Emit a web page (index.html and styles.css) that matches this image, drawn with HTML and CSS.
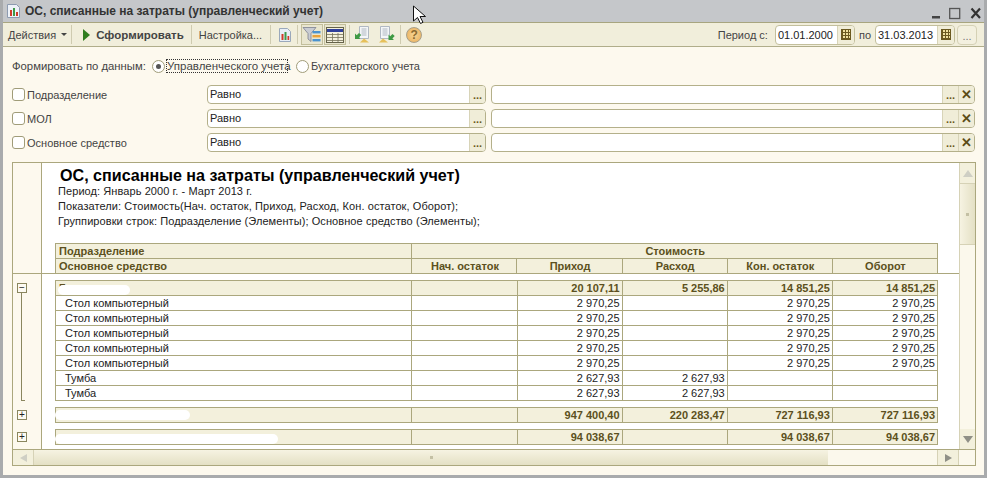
FILE: index.html
```html
<!DOCTYPE html>
<html lang="ru">
<head>
    <meta charset="UTF-8">
    <title>ОС, списанные на затраты (управленческий учет)</title>
    <link rel="stylesheet" href="styles.css">
</head>
<body>
    <div class="window">
        <div class="titlebar">
            <svg class="title-icon" width="15" height="16" viewBox="0 0 15 16">
                <path d="M1.500 1.500h9l3 3v10h-12z" fill="#eef2f8" stroke="#8d9bb0"/>
                <rect x="4" y="7" width="2" height="6" fill="#d03a2a"/>
                <rect x="7" y="5" width="2" height="8" fill="#3d9a48"/>
                <rect x="10" y="9" width="2" height="4" fill="#d03a2a"/>
            </svg>
            <span class="title-text">ОС, списанные на затраты (управленческий учет)</span>
            <div class="win-buttons">
                <svg width="53" height="16" viewBox="0 0 53 16">
                    <rect x="2" y="11" width="8" height="2.500" fill="#444"/>
                    <rect x="19.700" y="3.500" width="10" height="10" fill="none" stroke="#555" stroke-width="1.300"/>
                    <path d="M41.500 3.500l8.500 9.500M50 3.500l-8.500 9.500" stroke="#333" stroke-width="2.200"/>
                </svg>
            </div>
        </div>

        <div class="toolbar">
            <span class="tool-text actions">Действия</span>
            <span class="drop-arrow"></span>
            <span class="tool-sep sep-a"></span>
            <span class="play"></span>
            <span class="tool-text tool-bold">Сформировать</span>
            <span class="tool-sep sep-b"></span>
            <span class="tool-text">Настройка...</span>
            <span class="tool-sep sep-c"></span>
            <svg class="tool-icon" width="14" height="16" viewBox="0 0 14 16">
                <path d="M1.500 1.500h8l3 3v10h-11z" fill="#e8eef6" stroke="#9aa8bb"/>
                <rect x="3.500" y="7" width="2" height="6" fill="#d03a2a"/>
                <rect x="6.500" y="5" width="2" height="8" fill="#3d9a48"/>
                <rect x="9.500" y="9" width="1.700" height="4" fill="#d03a2a"/>
            </svg>
            <span class="tool-sep sep-d"></span>
            <span class="toggle">
                <svg width="20" height="18" viewBox="0 0 20 18">
                    <path d="M1 1.500h13L9 7.500v8l-3-2.500V7.500z" fill="#c9ccd2" stroke="#7d8290" stroke-width=".8"/>
                    <rect x="10.500" y="5" width="8" height="2.400" fill="#4a93d0"/>
                    <rect x="10.500" y="9" width="8" height="2.400" fill="#e8a23a"/>
                    <rect x="10.500" y="13" width="8" height="2.400" fill="#4a93d0"/>
                </svg>
            </span>
            <span class="toggle">
                <svg width="20" height="18" viewBox="0 0 20 18">
                    <rect x="1.500" y="1.500" width="17" height="15" fill="#f4f1dd" stroke="#66634a"/>
                    <rect x="2" y="3" width="16" height="3" fill="#2f3f9a"/>
                    <path d="M2 8.500h16M2 11.500h16M2 14.500h16M7.500 7v9M13 7v9" stroke="#77745a" stroke-width=".8"/>
                </svg>
            </span>
            <span class="tool-sep sep-e"></span>
            <svg class="tool-icon icon-load" width="18" height="18" viewBox="0 0 18 18">
                <path d="M5.500 .500h9v12h-9z" fill="#f4f6f8" stroke="#b0b8c2"/>
                <path d="M7.500 3h5M7.500 5h5M7.500 7h5M7.500 9h5" stroke="#b0b8c2"/>
                <path d="M1 13V7.500l1.700 1.700 2.300-2.300 2.200 2.200-2.300 2.300L6.500 13z" fill="#3f9a44"/>
                <path d="M6 16.500l4-4 5 4z" fill="#e6c05a"/>
            </svg>
            <svg class="tool-icon icon-save" width="18" height="18" viewBox="0 0 18 18">
                <path d="M2.500 .500h9v12h-9z" fill="#f4f6f8" stroke="#b0b8c2"/>
                <path d="M4.500 3h5M4.500 5h5M4.500 7h5M4.500 9h5" stroke="#b0b8c2"/>
                <path d="M10.500 14V8.500l1.700 1.700 2.300-2.300 2.200 2.200-2.300 2.300L16 14z" fill="#3f9a44"/>
                <path d="M1 16.500l4-4 5 4z" fill="#e6c05a"/>
            </svg>
            <span class="tool-sep sep-f"></span>
            <span class="help">?</span>

            <div class="period">
                <span class="tool-text">Период с:</span>
                <span class="date-field">
                    <span class="date-value">01.01.2000</span>
                    <span class="date-btn"><span class="cal"></span></span>
                </span>
                <span class="tool-text">по</span>
                <span class="date-field">
                    <span class="date-value">31.03.2013</span>
                    <span class="date-btn"><span class="cal"></span></span>
                </span>
                <span class="period-more">...</span>
            </div>
        </div>

        <div class="form">
            <div class="source-row">
                <span class="source-label">Формировать по данным:</span>
                <span class="radio radio-on"></span>
                <span class="radio-text radio-focus">Управленческого учета</span>
                <span class="radio"></span>
                <span class="radio-text">Бухгалтерского учета</span>
            </div>

            <div class="filter-row">
                <span class="check"></span>
                <span class="filter-name">Подразделение</span>
                <span class="field field-kind"><span class="field-value">Равно</span><span class="field-btn">...</span></span>
                <span class="field field-val"><span class="field-value"></span><span class="field-btn">...</span><span class="field-btn field-x">✕</span></span>
            </div>
            <div class="filter-row">
                <span class="check"></span>
                <span class="filter-name">МОЛ</span>
                <span class="field field-kind"><span class="field-value">Равно</span><span class="field-btn">...</span></span>
                <span class="field field-val"><span class="field-value"></span><span class="field-btn">...</span><span class="field-btn field-x">✕</span></span>
            </div>
            <div class="filter-row">
                <span class="check"></span>
                <span class="filter-name">Основное средство</span>
                <span class="field field-kind"><span class="field-value">Равно</span><span class="field-btn">...</span></span>
                <span class="field field-val"><span class="field-value"></span><span class="field-btn">...</span><span class="field-btn field-x">✕</span></span>
            </div>

            <div class="report">
                <div class="report-main">
                    <div class="report-body">
                        <div class="report-head">
                            <div class="tree"></div>
                            <div class="head-content">
                                <h1>ОС, списанные на затраты (управленческий учет)</h1>
                                <p>Период: Январь 2000 г. - Март 2013 г.</p>
                                <p>Показатели: Стоимость(Нач. остаток, Приход, Расход, Кон. остаток, Оборот);</p>
                                <p>Группировки строк: Подразделение (Элементы); Основное средство (Элементы);</p>
                                <table class="grid grid-head">
                                    <colgroup><col class="c-name"><col class="c-num"><col class="c-num"><col class="c-num"><col class="c-num"><col class="c-num"></colgroup>
                                    <tr><td class="name">Подразделение</td><td colspan="5" class="center">Стоимость</td></tr>
                                    <tr><td class="name">Основное средство</td><td class="center">Нач. остаток</td><td class="center">Приход</td><td class="center">Расход</td><td class="center">Кон. остаток</td><td class="center">Оборот</td></tr>
                                </table>
                            </div>
                        </div>

                        <div class="group">
                            <div class="tree">
                                <span class="node">−</span>
                                <span class="node-line"></span>
                            </div>
                            <div class="group-content">
                                <table class="grid">
                                    <colgroup><col class="c-name"><col class="c-num"><col class="c-num"><col class="c-num"><col class="c-num"><col class="c-num"></colgroup>
                                    <tr class="total"><td class="name">Г<span class="blot blot-a"></span></td><td></td><td>20 107,11</td><td>5 255,86</td><td>14 851,25</td><td>14 851,25</td></tr>
                                    <tr><td class="item">Стол компьютерный</td><td></td><td>2 970,25</td><td></td><td>2 970,25</td><td>2 970,25</td></tr>
                                    <tr><td class="item">Стол компьютерный</td><td></td><td>2 970,25</td><td></td><td>2 970,25</td><td>2 970,25</td></tr>
                                    <tr><td class="item">Стол компьютерный</td><td></td><td>2 970,25</td><td></td><td>2 970,25</td><td>2 970,25</td></tr>
                                    <tr><td class="item">Стол компьютерный</td><td></td><td>2 970,25</td><td></td><td>2 970,25</td><td>2 970,25</td></tr>
                                    <tr><td class="item">Стол компьютерный</td><td></td><td>2 970,25</td><td></td><td>2 970,25</td><td>2 970,25</td></tr>
                                    <tr><td class="item">Тумба</td><td></td><td>2 627,93</td><td>2 627,93</td><td></td><td></td></tr>
                                    <tr><td class="item">Тумба</td><td></td><td>2 627,93</td><td>2 627,93</td><td></td><td></td></tr>
                                </table>
                            </div>
                        </div>

                        <div class="group">
                            <div class="tree"><span class="node">+</span></div>
                            <div class="group-content">
                                <table class="grid">
                                    <colgroup><col class="c-name"><col class="c-num"><col class="c-num"><col class="c-num"><col class="c-num"><col class="c-num"></colgroup>
                                    <tr class="total"><td class="name"><span class="blot blot-b"></span></td><td></td><td>947 400,40</td><td>220 283,47</td><td>727 116,93</td><td>727 116,93</td></tr>
                                </table>
                            </div>
                        </div>

                        <div class="group group-last">
                            <div class="tree"><span class="node">+</span></div>
                            <div class="group-content">
                                <table class="grid">
                                    <colgroup><col class="c-name"><col class="c-num"><col class="c-num"><col class="c-num"><col class="c-num"><col class="c-num"></colgroup>
                                    <tr class="total"><td class="name"><span class="blot blot-c"></span></td><td></td><td>94 038,67</td><td></td><td>94 038,67</td><td>94 038,67</td></tr>
                                </table>
                            </div>
                        </div>
                    </div>

                    <div class="vscroll">
                        <span class="sb-btn sb-up"><span class="arrow-up"></span></span>
                        <span class="sb-thumb sb-thumb-v"></span>
                        <span class="sb-track"></span>
                        <span class="sb-btn sb-down"><span class="arrow-down"></span></span>
                    </div>
                </div>
                <div class="hscroll">
                    <span class="sb-btn sb-left"><span class="arrow-left"></span></span>
                    <span class="sb-thumb sb-thumb-h"></span>
                    <span class="sb-track"></span>
                    <span class="sb-btn sb-right"><span class="arrow-right"></span></span>
                    <span class="sb-corner"></span>
                </div>
            </div>
        </div>

        <!-- курсор мыши поверх окна -->
        <svg class="cursor" width="16" height="20" viewBox="0 0 16 20">
            <path d="M1.500 1v15l4-3.500 3 6 2.500-1.200-3-5.800h5.500z" fill="#fff" stroke="#111" stroke-width="1"/>
        </svg>
    </div>
</body>
</html>
```

FILE: styles.css
```css
body {
    margin: 0;
    background: #fff;
    font-family: "Liberation Sans", Arial, sans-serif;
    font-size: 11px;
    color: #333;
}
.window {
    position: relative;
    width: 987px;
    height: 478px;
    box-sizing: border-box;
    border: 3px solid #a9abad;
    border-top: none;
    background: #fdf9ee;
    display: flex;
    flex-direction: column;
    overflow: hidden;
}
.titlebar {
    height: 22px;
    flex: none;
    background: #c5c7ca;
    display: flex;
    align-items: center;
    padding-left: 3px;
}
.title-icon {
    margin-right: 4px;
}
.title-text {
    font-size: 12px;
    font-weight: bold;
    color: #333;
}
.win-buttons {
    margin-left: auto;
    margin-right: 1px;
    height: 16px;
    padding-top: 3px;
}
.toolbar {
    height: 25px;
    flex: none;
    box-sizing: border-box;
    background: #f1eedb;
    border-top: 1px solid #a8a57f;
    border-bottom: 1px solid #b0ad8a;
    display: flex;
    align-items: center;
    padding-left: 5px;
}
.tool-text {
    font-size: 11px;
    color: #444;
    white-space: nowrap;
}
.tool-bold {
    font-size: 11.500px;
    font-weight: bold;
    margin-left: 6px;
}
.drop-arrow {
    width: 0;
    height: 0;
    border-left: 3px solid transparent;
    border-right: 3px solid transparent;
    border-top: 3px solid #444;
    margin-left: 5px;
}
.tool-sep {
    width: 1px;
    height: 19px;
    background: #cfcbb0;
}
.sep-a { margin: 0 11px 0 4px; }
.sep-b { margin: 0 7px 0 7px; }
.sep-c { margin: 0 7px 0 8px; }
.sep-d { margin: 0 3px 0 5px; }
.sep-e { margin: 0 4px 0 2px; }
.sep-f { margin: 0 5px 0 4px; }
.play {
    width: 0;
    height: 0;
    border-left: 7px solid #2f7d1e;
    border-top: 6px solid transparent;
    border-bottom: 6px solid transparent;
}
.toggle {
    width: 22px;
    height: 21px;
    box-sizing: border-box;
    border: 1px solid #c3bf9c;
    background: #e9e6cf;
    display: flex;
    align-items: center;
    justify-content: center;
    margin-right: 1px;
}
.icon-load { margin-right: 6px; }
.help {
    width: 16px;
    height: 16px;
    box-sizing: border-box;
    border-radius: 50%;
    border: 1px solid #a8a08a;
    background: radial-gradient(circle, #f6d595, #e8ac58);
    color: #8a6a30;
    font-size: 12px;
    font-weight: bold;
    line-height: 14px;
    text-align: center;
}
.period {
    margin-left: auto;
    margin-right: 7px;
    display: flex;
    align-items: center;
}
.date-field {
    width: 80px;
    height: 20px;
    box-sizing: border-box;
    margin: 0 4px 0 7px;
    border: 1px solid #c3bf9c;
    border-radius: 4px;
    background: #fff;
    display: flex;
    overflow: hidden;
}
.date-field + .tool-text + .date-field {
    margin-left: 4px;
    margin-right: 2px;
}
.date-value {
    flex: 1;
    font-size: 11px;
    line-height: 18px;
    padding-left: 2px;
    color: #222;
}
.date-btn {
    width: 16px;
    background: #f0edd8;
    border-left: 1px solid #d8d4b8;
    display: flex;
    align-items: center;
    justify-content: center;
}
.cal {
    width: 10px;
    height: 11px;
    box-sizing: border-box;
    border: 1px solid #6b5a20;
    background:
        repeating-linear-gradient(0deg, #6b5a20 0 1px, transparent 1px 3px),
        repeating-linear-gradient(90deg, #6b5a20 0 1px, #f0e2a0 1px 3px);
}
.period-more {
    width: 20px;
    height: 20px;
    box-sizing: border-box;
    border: 1px solid #d5d1b5;
    border-radius: 4px;
    background: #f3f0df;
    text-align: center;
    line-height: 20px;
    color: #777;
}
.form {
    flex: 1;
    min-height: 0;
    padding: 0 8px 9px 9px;
    display: flex;
    flex-direction: column;
}
.source-row {
    height: 38px;
    flex: none;
    display: flex;
    align-items: center;
    color: #444;
}
.source-label {
    width: 140px;
    font-size: 11.300px;
    white-space: nowrap;
}
.radio {
    width: 13px;
    height: 13px;
    box-sizing: border-box;
    border: 1px solid #a09c78;
    border-radius: 50%;
    background: #fff;
    margin-right: 2px;
    position: relative;
}
.radio-on::after {
    content: "";
    position: absolute;
    left: 3px;
    top: 3px;
    width: 5px;
    height: 5px;
    border-radius: 50%;
    background: #555;
}
.radio-text {
    color: #444;
}
.radio-focus {
    width: 120px;
    box-sizing: border-box;
    outline: 1px dotted #333;
    margin-right: 9px;
    font-size: 11.500px;
    white-space: nowrap;
}
.filter-row {
    height: 19px;
    flex: none;
    margin-bottom: 5px;
    display: flex;
    align-items: center;
    color: #444;
}
.check {
    width: 13px;
    height: 13px;
    box-sizing: border-box;
    border: 1px solid #a09c78;
    border-radius: 3px;
    background: #fff;
    margin-right: 2px;
}
.filter-name {
    width: 180px;
}
.field {
    height: 19px;
    box-sizing: border-box;
    border: 1px solid #b4b08a;
    border-radius: 4px;
    background: #fff;
    display: flex;
    overflow: hidden;
}
.field-kind {
    width: 279px;
    margin-right: 5px;
}
.field-val {
    width: 484px;
}
.field-value {
    flex: 1;
    line-height: 17px;
    padding-left: 2px;
    color: #222;
}
.field-btn {
    width: 15px;
    background: #f0edd8;
    border-left: 1px solid #d8d4b8;
    color: #6b5a20;
    font-weight: bold;
    text-align: center;
    line-height: 19px;
}
.field-x {
    font-size: 13px;
    line-height: 17px;
    color: #5c4c16;
}
.report {
    flex: 1;
    min-height: 0;
    margin-top: 5px;
    display: flex;
    flex-direction: column;
    border: 1px solid #aba77d;
    background: #fff;
}
.report-main {
    flex: 1;
    min-height: 0;
    display: flex;
}
.report-body {
    flex: 1;
    min-width: 0;
    display: flex;
    flex-direction: column;
    overflow: hidden;
}
.report-head {
    height: 111px;
    flex: none;
    box-sizing: border-box;
    border-bottom: 1px solid #aba77d;
    display: flex;
}
.tree {
    width: 29px;
    flex: none;
    box-sizing: border-box;
    background: #fdf9ee;
    border-right: 1px solid #aba77d;
    position: relative;
}
.head-content {
    padding: 0 0 0 13px;
}
h1 {
    margin: 2px 0 0 5px;
    font-size: 16.100px;
    line-height: 20px;
    font-weight: bold;
    color: #000;
}
.head-content p {
    margin: 0 0 0 3px;
    font-size: 11px;
    letter-spacing: .08px;
    line-height: 15px;
    color: #222;
}
.head-content h1 + p {
    margin-top: -1px;
}
.grid {
    border-collapse: collapse;
    table-layout: fixed;
    width: 883px;
    font-size: 11px;
}
.grid-head {
    margin-top: 14px;
    background: #f3f0dc;
    font-weight: bold;
}
.c-name { width: 356px; }
.c-num { width: 105px; }
.grid td {
    height: 14px;
    padding: 0 2px 0 3px;
    border: 1px solid #aba77d;
    line-height: 14px;
    text-align: right;
    color: #222;
    white-space: nowrap;
    overflow: hidden;
}
.grid-head td {
    color: #5c5020;
}
.grid .name {
    text-align: left;
}
.grid .center {
    text-align: center;
}
.grid .item {
    text-align: left;
    padding-left: 9px;
}
.total {
    background: #f3f0dc;
}
.grid .total td {
    font-weight: bold;
    color: #5c5020;
}
.group {
    flex: none;
    display: flex;
    position: relative;
}
.group-last {
    flex: 1;
}
.group-content {
    padding: 6px 0 0 13px;
}
.blot {
    position: absolute;
    background: #fff;
    border-radius: 5px;
    height: 10px;
}
.blot-a { left: 45px; top: 11px; width: 72px; }
.blot-b { left: 42px; top: 9px; width: 135px; }
.blot-c { left: 42px; top: 11px; width: 223px; }
.node {
    position: absolute;
    left: 4px;
    top: 9px;
    width: 10px;
    height: 10px;
    box-sizing: border-box;
    border: 1px solid #8a865e;
    background: #fdfbf2;
    text-align: center;
    font-size: 10px;
    line-height: 7px;
    color: #222;
}
.node-line {
    position: absolute;
    left: 8px;
    top: 19px;
    bottom: 0;
    width: 4px;
    box-sizing: border-box;
    border-left: 1px solid #8a865e;
    border-bottom: 1px solid #8a865e;
}
.vscroll {
    width: 16px;
    flex: none;
    box-sizing: border-box;
    border-left: 1px solid #d6d2b6;
    display: flex;
    flex-direction: column;
    background: #fbf8ec;
}
.hscroll {
    height: 16px;
    flex: none;
    box-sizing: border-box;
    border-top: 1px solid #aba77d;
    display: flex;
    background: #fbf8ec;
}
.sb-btn {
    flex: none;
    background: #f3f0dc;
    display: flex;
    align-items: center;
    justify-content: center;
}
.sb-up, .sb-down {
    height: 20px;
}
.sb-left, .sb-right {
    width: 20px;
}
.sb-left { border-right: 1px solid #d6d2b6; }
.sb-right { border-left: 1px solid #d6d2b6; }
.sb-track {
    flex: 1;
}
.sb-thumb {
    flex: none;
    display: flex;
    align-items: center;
    justify-content: center;
}
.sb-thumb::after {
    content: "";
    width: 3px;
    height: 3px;
    background: #c4c0a4;
}
.sb-thumb-v {
    height: 60px;
    background: linear-gradient(90deg, #f6f3e2, #e4e0c4);
    border-top: 1px solid #d6d2b6;
    border-bottom: 1px solid #d6d2b6;
}
.sb-thumb-h {
    width: 794px;
    background: linear-gradient(180deg, #f6f3e2, #e4e0c4);
}
.sb-corner {
    width: 16px;
    flex: none;
    border-left: 1px solid #d6d2b6;
}
.arrow-up, .arrow-down, .arrow-left, .arrow-right {
    width: 0;
    height: 0;
}
.arrow-up {
    border-left: 5px solid transparent;
    border-right: 5px solid transparent;
    border-bottom: 7px solid #cfcfc4;
}
.arrow-down {
    border-left: 5px solid transparent;
    border-right: 5px solid transparent;
    border-top: 7px solid #8f8f86;
}
.arrow-left {
    border-top: 4px solid transparent;
    border-bottom: 4px solid transparent;
    border-right: 7px solid #cfcfc4;
}
.arrow-right {
    border-top: 4px solid transparent;
    border-bottom: 4px solid transparent;
    border-left: 7px solid #8f8f86;
}
.cursor {
    position: absolute;
    left: 409px;
    top: 5px;
}
```
